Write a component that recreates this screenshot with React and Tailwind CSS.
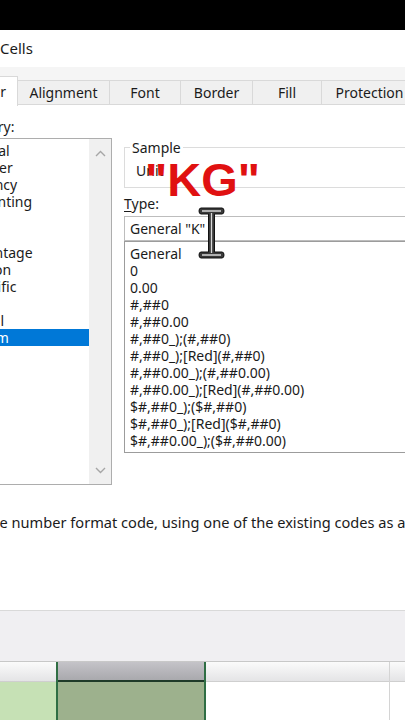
import React from 'react';

const CATEGORIES = [
  'General', 'Number', 'Currency', 'Accounting', 'Date', 'Time',
  'Percentage', 'Fraction', 'Scientific', 'Text', 'Special', 'Custom',
];

const TYPES = [
  'General',
  '0',
  '0.00',
  '#,##0',
  '#,##0.00',
  '#,##0_);(#,##0)',
  '#,##0_);[Red](#,##0)',
  '#,##0.00_);(#,##0.00)',
  '#,##0.00_);[Red](#,##0.00)',
  '$#,##0_);($#,##0)',
  '$#,##0_);[Red]($#,##0)',
  '$#,##0.00_);($#,##0.00)',
];

const TABS = [
  { label: 'Alignment', w: 'w-[92px]' },
  { label: 'Font', w: 'w-[71px]' },
  { label: 'Border', w: 'w-[72px]' },
  { label: 'Fill', w: 'w-[69px]' },
  { label: 'Protection', w: 'w-[96px]' },
];

const Chevron = ({ up }) => (
  <svg width="11" height="7" viewBox="0 0 11 7" fill="none">
    <polyline
      points={up ? '1,6 5.5,1.5 10,6' : '1,1 5.5,5.5 10,1'}
      stroke="#a6a6a6"
      strokeWidth="1.4"
    />
  </svg>
);

const IBeam = () => (
  <svg width="27" height="52" viewBox="0 0 27 52">
    <path
      d="M3 1 H24 Q26 1 26 4 Q26 7 24 7 H16.5 V45 H24 Q26 45 26 48 Q26 51 24 51 H3 Q1 51 1 48 Q1 45 3 45 H10.5 V7 H3 Q1 7 1 4 Q1 1 3 1 Z"
      fill="#3a3a3a"
      stroke="#111"
      strokeWidth="1"
    />
    <path d="M4 4 H23 M13.5 6 V46 M4 48 H23" stroke="#d8d8d8" strokeWidth="1.3" />
  </svg>
);

export default function App() {
  return (
    <div className="relative w-[405px] h-[720px] overflow-hidden bg-white text-[14px] text-[#1b1b1b] font-['Noto_Sans',sans-serif]">
      {/* top black bar */}
      <div className="h-[30px] bg-black" />

      {/* title */}
      <div className="h-[37px] flex items-center text-[15px] leading-none">Cells</div>

      <div className="ml-[-46px] w-[500px]">
        {/* tab strip */}
        <div className="h-[38px] bg-[#f5f5f5] flex items-end">
          <div className="w-[64px] h-[30px] bg-white border-t border-r border-[#d9d9d9] flex items-center justify-end pr-[11px] relative top-[1px]">
            Number
          </div>
          {TABS.map((t) => (
            <div
              key={t.label}
              className={`${t.w} h-[25px] bg-[#f0f0f0] border-t border-r border-b border-[#d9d9d9] flex items-center justify-center`}
            >
              {t.label}
            </div>
          ))}
        </div>

        {/* content */}
        <div className="h-[505px] flex flex-col pt-[13px]">
          <div className="flex gap-[12px]">
            {/* left column */}
            <div className="w-[158px] flex flex-col">
              <div className="leading-[17px] -ml-[3px]">Category:</div>
              <div className="mt-[3px] h-[347px] border border-[#adadad] flex">
                <div className="flex-1 pt-[3px] leading-[17px]">
                  {CATEGORIES.map((c) => (
                    <div
                      key={c}
                      className={
                        c === 'Custom'
                          ? 'bg-[#0078d7] text-white pl-[3px] h-[17px]'
                          : 'pl-[3px] h-[17px]'
                      }
                    >
                      {c}
                    </div>
                  ))}
                </div>
                <div className="w-[22px] bg-[#f0f0f0] flex flex-col items-center justify-between pt-[11px] pb-[10px]">
                  <Chevron up />
                  <Chevron />
                </div>
              </div>
            </div>

            {/* right column */}
            <div className="w-[330px] pt-[21px] flex flex-col">
              <fieldset className="border border-[#dcdcdc] h-[49px] pt-[6px]">
                <legend className="ml-[5px] px-[2px] leading-[17px]">Sample</legend>
                <div className="leading-[17px] pl-[11px]">Unit</div>
              </fieldset>
              <div className="mt-[7px] leading-[17px]">
                <span className="underline underline-offset-2">T</span>ype:
              </div>
              <div className="mt-[4px] h-[25px] border border-[#bdbdbd] flex items-center pl-[5px]">
                General "K"
              </div>
              <div className="h-[212px] border border-[#9c9c9c] pt-[3px] pl-[5px] leading-[17px]">
                {TYPES.map((t) => (
                  <div key={t} className="h-[17px] whitespace-nowrap">{t}</div>
                ))}
              </div>
            </div>
          </div>

          <div className="mt-[29px] -ml-[5px] text-[14.6px] leading-[17px] whitespace-nowrap">
            Type the number format code, using one of the existing codes as a starting point.
          </div>
        </div>
      </div>

      {/* footer band */}
      <div className="h-[52px] bg-[#f0eff2] border-t border-[#d9d9d9] border-b border-b-[#c8c8c8]" />

      {/* spreadsheet */}
      <div className="flex h-[58px]">
        <div className="w-[56px] flex flex-col">
          <div className="h-[20px] bg-gradient-to-b from-[#fbfbfb] to-[#e4e4e6] border-b border-[#cfcfcf]" />
          <div className="flex-1 bg-[#c6e1b5]" />
        </div>
        <div className="w-[150px] flex flex-col border-x-2 border-[#2f6e44]">
          <div className="h-[20px] bg-gradient-to-b from-[#c4c3c8] to-[#a9a9ad] border-b-2 border-[#1f3a29]" />
          <div className="flex-1 bg-[#9db18d]" />
        </div>
        <div className="w-[184px] flex flex-col border-r border-[#d4d4d4]">
          <div className="h-[20px] bg-gradient-to-b from-[#fbfbfb] to-[#e4e4e6] border-b border-[#cfcfcf]" />
          <div className="flex-1 bg-white" />
        </div>
        <div className="flex-1 flex flex-col">
          <div className="h-[20px] bg-gradient-to-b from-[#fbfbfb] to-[#e4e4e6] border-b border-[#cfcfcf]" />
          <div className="flex-1 bg-white" />
        </div>
      </div>

      {/* red overlay text */}
      <div className="absolute left-[145px] top-[156px] text-[47px] leading-none font-bold text-[#e01111] font-['Liberation_Sans',Arial,sans-serif]">
        "KG"
      </div>

      {/* text cursor */}
      <div className="absolute left-[198px] top-[207px]">
        <IBeam />
      </div>
    </div>
  );
}
